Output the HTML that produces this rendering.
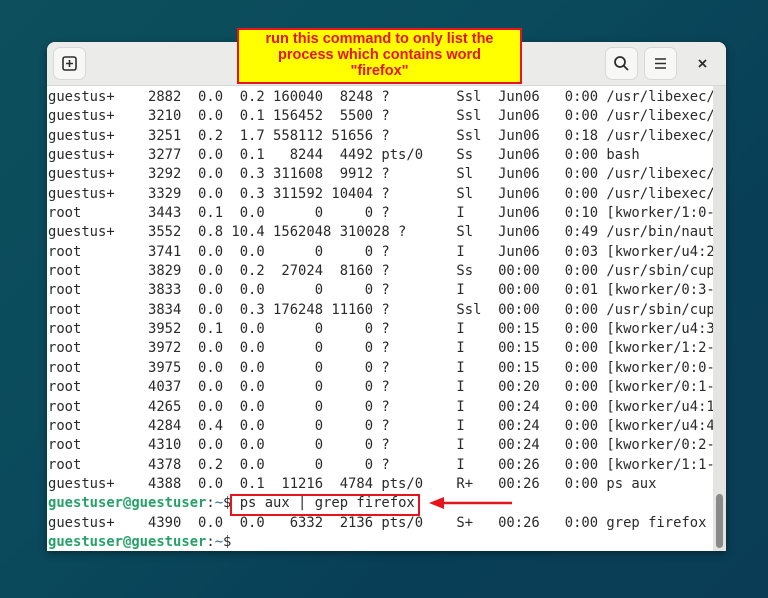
<!DOCTYPE html>
<html><head><meta charset="utf-8"><style>
html,body{margin:0;padding:0;}
body{width:768px;height:598px;overflow:hidden;position:relative;
background:linear-gradient(135deg,#0d4f5c 0%,#0a4a5c 40%,#083f57 70%,#0a3d55 100%);font-family:"Liberation Sans",sans-serif;}
.win{position:absolute;left:47px;top:42px;width:679px;height:509px;background:#fff;border-radius:8px 8px 0 0;overflow:hidden;box-shadow:0 2px 8px rgba(0,0,0,.4);}
.hdr{position:absolute;left:0;top:0;width:679px;height:43px;background:#ebebea;border-bottom:1px solid #d6d6d4;}
.btn{position:absolute;top:6px;width:31px;height:31px;border-radius:6px;background:#f7f7f6;box-shadow:0 0 0 1px #d8d8d6;}
.term{position:absolute;left:1px;top:46px;width:665px;height:463px;overflow:hidden;}
pre{margin:0;font-family:"DejaVu Sans Mono","Liberation Mono",monospace;font-size:13.85px;line-height:19.35px;color:#2a2a2a;white-space:pre;}
.g{color:#26a269;font-weight:bold}.b{color:#3465a4}
.sb{position:absolute;left:666px;top:44px;width:13px;height:465px;background:#e4e4e3;}
.th{position:absolute;left:3px;top:408px;width:7px;height:54px;background:#8a8a8a;border-radius:4px;}
.note{position:absolute;left:237px;top:28px;width:281px;height:51px;background:#ffff00;border:2px solid #e8141c;color:#e8141c;font-weight:bold;font-size:14.5px;line-height:16px;text-align:center;padding-top:1px;}
.box{position:absolute;left:230px;top:494px;width:186px;height:18px;border:2px solid #e8141c;}
</style></head><body>
<div class="win">
<div class="hdr">
<div class="btn" style="left:7px;"><svg width="31" height="31"><rect x="9" y="9" width="13" height="13" rx="2" fill="none" stroke="#2e2e2e" stroke-width="1.6"/><path d="M15.5 12v7M12 15.5h7" stroke="#2e2e2e" stroke-width="1.6"/></svg></div>
<div class="btn" style="left:559px;"><svg width="31" height="31"><circle cx="14" cy="14" r="5" fill="none" stroke="#2e2e2e" stroke-width="1.8"/><path d="M17.5 17.5l4.5 4.5" stroke="#2e2e2e" stroke-width="1.8"/></svg></div>
<div class="btn" style="left:598px;"><svg width="31" height="31"><path d="M10 11h11M10 15.5h11M10 20h11" stroke="#2e2e2e" stroke-width="1.6"/></svg></div>
<svg style="position:absolute;left:650px;top:16px" width="12" height="12"><path d="M2 2l7 7M9 2l-7 7" stroke="#2e2e2e" stroke-width="1.8"/></svg>
</div>
<div class="term"><pre>guestus+    2882  0.0  0.2 160040  8248 ?        Ssl  Jun06   0:00 /usr/libexec/
guestus+    3210  0.0  0.1 156452  5500 ?        Ssl  Jun06   0:00 /usr/libexec/
guestus+    3251  0.2  1.7 558112 51656 ?        Ssl  Jun06   0:18 /usr/libexec/
guestus+    3277  0.0  0.1   8244  4492 pts/0    Ss   Jun06   0:00 bash
guestus+    3292  0.0  0.3 311608  9912 ?        Sl   Jun06   0:00 /usr/libexec/
guestus+    3329  0.0  0.3 311592 10404 ?        Sl   Jun06   0:00 /usr/libexec/
root        3443  0.1  0.0      0     0 ?        I    Jun06   0:10 [kworker/1:0-
guestus+    3552  0.8 10.4 1562048 310028 ?      Sl   Jun06   0:49 /usr/bin/naut
root        3741  0.0  0.0      0     0 ?        I    Jun06   0:03 [kworker/u4:2
root        3829  0.0  0.2  27024  8160 ?        Ss   00:00   0:00 /usr/sbin/cup
root        3833  0.0  0.0      0     0 ?        I    00:00   0:01 [kworker/0:3-
root        3834  0.0  0.3 176248 11160 ?        Ssl  00:00   0:00 /usr/sbin/cup
root        3952  0.1  0.0      0     0 ?        I    00:15   0:00 [kworker/u4:3
root        3972  0.0  0.0      0     0 ?        I    00:15   0:00 [kworker/1:2-
root        3975  0.0  0.0      0     0 ?        I    00:15   0:00 [kworker/0:0-
root        4037  0.0  0.0      0     0 ?        I    00:20   0:00 [kworker/0:1-
root        4265  0.0  0.0      0     0 ?        I    00:24   0:00 [kworker/u4:1
root        4284  0.4  0.0      0     0 ?        I    00:24   0:00 [kworker/u4:4
root        4310  0.0  0.0      0     0 ?        I    00:24   0:00 [kworker/0:2-
root        4378  0.2  0.0      0     0 ?        I    00:26   0:00 [kworker/1:1-
guestus+    4388  0.0  0.1  11216  4784 pts/0    R+   00:26   0:00 ps aux
<span class="g">guestuser@guestuser</span>:<span class="b">~</span>$ ps aux | grep firefox
guestus+    4390  0.0  0.0   6332  2136 pts/0    S+   00:26   0:00 grep firefox
<span class="g">guestuser@guestuser</span>:<span class="b">~</span>$</pre></div>
<div class="sb"><div class="th"></div></div>
</div>
<div class="box"></div>
<svg style="position:absolute;left:428px;top:496px" width="86" height="14"><path d="M14 7H84" stroke="#e8141c" stroke-width="2.5"/><path d="M1 7L16 1V13Z" fill="#e8141c"/></svg>
<div class="note">run this command to only list the<br>process which contains word<br>"firefox"</div>
</body></html>
